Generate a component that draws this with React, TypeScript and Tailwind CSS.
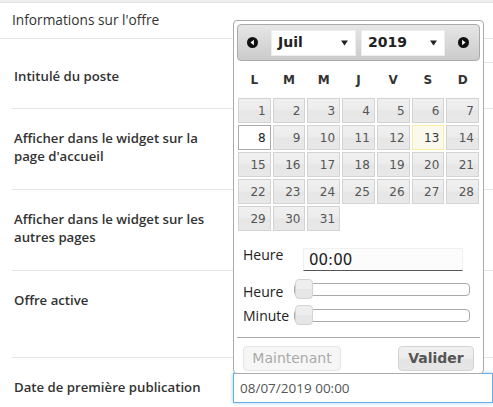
const dayNames = ['L', 'M', 'M', 'J', 'V', 'S', 'D'];
const days = Array.from({ length: 31 }, (_, i) => i + 1);

function NavIcon({ dir }: { dir: 'prev' | 'next' }) {
  return (
    <svg width="11" height="11" viewBox="0 0 11 11">
      <circle cx="5.5" cy="5.5" r="5.5" fill="#111111" />
      {dir === 'prev' ? (
        <polygon points="6.9,2.7 3.5,5.5 6.9,8.3" fill="#ffffff" />
      ) : (
        <polygon points="4.1,2.7 7.5,5.5 4.1,8.3" fill="#ffffff" />
      )}
    </svg>
  );
}

function FakeSelect({ value, width }: { value: string; width: string }) {
  return (
    <div
      className={`flex h-[26px] ${width} items-center justify-between border border-[#eeeeee] bg-white pl-[6px] pr-[7px] text-[14px] font-bold text-[#222222]`}
    >
      <span>{value}</span>
      <svg width="7" height="6" viewBox="0 0 7 6">
        <polygon points="0,0.5 7,0.5 3.5,5.5" fill="#222222" />
      </svg>
    </div>
  );
}

function DayCell({ d }: { d: number }) {
  const base = 'flex h-[25px] items-center justify-end border pr-[4px] text-[12px]';
  if (d === 8) {
    return <div className={`${base} border-[#aaaaaa] bg-white text-[#212121]`}>{d}</div>;
  }
  if (d === 13) {
    return <div className={`${base} border-[#fcefa1] bg-[#fbf9ee] text-[#363636]`}>{d}</div>;
  }
  return (
    <div
      className={`${base} border-[#d3d3d3] bg-[linear-gradient(#f0f0f0_0%,#ececec_48%,#e6e6e6_52%,#e8e8e8_100%)] text-[#555555]`}
    >
      {d}
    </div>
  );
}

function Slider() {
  return (
    <div className="relative h-[20px] w-[176px]">
      <div className="absolute left-0 right-0 top-[4px] h-[13px] rounded-[4px] border border-[#aaaaaa] bg-white" />
      <div className="absolute left-[1px] top-0 h-[20px] w-[18px] rounded-[4px] border border-[#d3d3d3] bg-[linear-gradient(#eeeeee_50%,#e6e6e6_50%)]" />
    </div>
  );
}

function DatePicker() {
  return (
    <div className="absolute left-[233px] top-[20px] h-[354px] w-[251px] overflow-hidden rounded-[4px] border border-[#aaaaaa] bg-white p-[3px] font-['DejaVu_Sans',sans-serif]">
      <div className="flex h-[37px] items-center rounded-[4px] border border-[#aaaaaa] bg-[linear-gradient(#e6e6e6,#cbcbcb)]">
        <div className="ml-[9px]">
          <NavIcon dir="prev" />
        </div>
        <div className="ml-[13px] flex gap-[5px]">
          <FakeSelect value="Juil" width="w-[85px]" />
          <FakeSelect value="2019" width="w-[84px]" />
        </div>
        <div className="ml-[13px]">
          <NavIcon dir="next" />
        </div>
      </div>

      <div className="grid h-[37px] grid-cols-7 items-center gap-x-[2px] px-[1px] text-[12px] font-bold text-[#333333]">
        {dayNames.map((n, i) => (
          <div key={i} className="text-center">
            {n}
          </div>
        ))}
      </div>

      <div className="grid grid-cols-7 gap-[2px] px-[1px]">
        {days.map((d) => (
          <DayCell key={d} d={d} />
        ))}
      </div>

      <div className="mt-[15px] flex pl-[6px] font-['Open_Sans',sans-serif] text-[14px] leading-[18px] text-[#222222]">
        <div className="w-[60px]">Heure</div>
        <div className="mt-[2px] flex h-[23px] w-[160px] items-center border border-[#f0f0f0] border-b-[#555555] bg-[#fcfcfc] pl-[5px] font-['DejaVu_Sans',sans-serif] text-[15px] text-[#222222]">
          00:00
        </div>
      </div>

      <div className="mt-[8px] flex flex-col gap-[4px] pl-[6px] font-['Open_Sans',sans-serif] text-[14px] leading-[18px] text-[#222222]">
        <div className="flex">
          <div className="mt-[4px] w-[51px]">Heure</div>
          <Slider />
        </div>
        <div className="flex">
          <div className="mt-[2px] w-[51px]">Minute</div>
          <Slider />
        </div>
      </div>

      <div className="mt-[12px] border-t border-[#aaaaaa]" />

      <div className="mt-[8px] flex justify-between px-[6px]">
        <div className="flex h-[25px] w-[98px] items-center justify-center rounded-[4px] border border-[#e4e4e4] bg-[#f6f6f6] text-[14px] text-[#aaaaaa]">
          Maintenant
        </div>
        <div className="flex h-[25px] w-[76px] items-center justify-center rounded-[4px] border border-[#d3d3d3] bg-[linear-gradient(#f0f0f0_0%,#ececec_48%,#e4e4e4_52%,#e6e6e6_100%)] text-[14px] font-bold text-[#555555]">
          Valider
        </div>
      </div>
    </div>
  );
}

function Row({
  label,
  height,
  pt,
  children,
}: {
  label: React.ReactNode;
  height: string;
  pt: string;
  children?: React.ReactNode;
}) {
  return (
    <div className={`ml-3 flex ${height} border-b border-[#e5e5e5]`}>
      <div className={`w-[221px] pl-[2px] ${pt} text-[13.2px] font-semibold leading-[18px] text-[#333333]`}>
        {label}
      </div>
      <div className="flex-1">{children}</div>
    </div>
  );
}

export default function App() {
  return (
    <div className="relative h-[407px] w-[493px] overflow-hidden bg-white font-['Open_Sans',sans-serif]">
      <div className="h-[3px] border-b border-[#e2e2e2] bg-[#efefef]" />
      <div className="flex h-[36px] items-center border-b border-[#e5e5e5] px-3 text-[13.7px] text-[#333333]">
        Informations sur l'offre
      </div>

      <Row label="Intitulé du poste" height="h-[70px]" pt="pt-[28px]">
        <div className="mt-[23px] border-t border-[#e5e5e5]" />
      </Row>
      <Row
        label={
          <>
            Afficher dans le widget sur la
            <br />
            page d'accueil
          </>
        }
        height="h-[81px]"
        pt="pt-[20px]"
      />
      <Row
        label={
          <>
            Afficher dans le widget sur les
            <br />
            autres pages
          </>
        }
        height="h-[81px]"
        pt="pt-[20px]"
      />
      <Row label="Offre active" height="h-[87px]" pt="pt-[20px]" />

      <div className="ml-3 flex">
        <div className="w-[221px] pl-[2px] pt-[20px] text-[13.2px] font-semibold leading-[18px] text-[#333333]">
          Date de première publication
        </div>
        <div className="mt-[15px] flex h-[30px] flex-1 items-center border border-[#66afe9] pl-[6px] text-[13.5px] text-[#555555] shadow-[0_0_4px_rgba(102,175,233,0.6)]">
          08/07/2019 00:00
        </div>
      </div>

      <DatePicker />
    </div>
  );
}
